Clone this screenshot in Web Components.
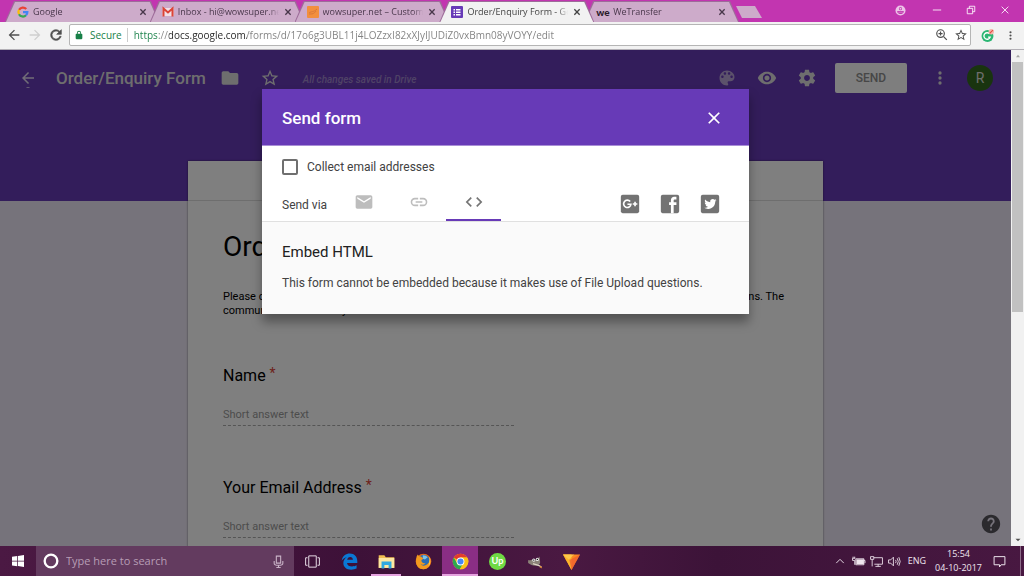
<!DOCTYPE html>
<html lang="en">
<head>
<meta charset="utf-8">
<title>Order/Enquiry Form - Google Forms</title>
<style>
  html, body { margin: 0; height: 100%; }
  body { font-family: Roboto, "Liberation Sans", sans-serif; overflow: hidden; }
</style>
</head>
<body>
<desk-top></desk-top>

<script>
const ICONS = {
  back: '<path d="M20 11H7.83l5.59-5.59L12 4l-8 8 8 8 1.41-1.41L7.83 13H20v-2z"/>',
  backhint: '<path d="M20 11H7.83l5.59-5.59L12 4l-8 8 8 8 1.41-1.41L7.83 13H20v-2z"/><path d="M10 24h4v1h-4z"/>',
  forward: '<path d="M4 11h12.17l-5.59-5.59L12 4l8 8-8 8-1.41-1.41L16.17 13H4v-2z"/>',
  reload: '<path d="M17.65 6.35A7.96 7.96 0 0 0 12 4a8 8 0 1 0 7.73 10h-2.08A6 6 0 1 1 12 6c1.66 0 3.14.69 4.22 1.78L13 11h7V4l-2.35 2.35z" stroke="currentColor" stroke-width="1"/>',
  lock: '<path d="M18 9h-1V7A5 5 0 0 0 7 7v2H6a2 2 0 0 0-2 2v9c0 1.100.9 2 2 2h12a2 2 0 0 0 2-2v-9a2 2 0 0 0-2-2zM9 7a3 3 0 0 1 6 0v2H9z"/>',
  zoom: '<circle cx="9.500" cy="9.500" r="6.500" fill="none" stroke="currentColor" stroke-width="2"/><path d="M14 15.500l1.500-1.500 5.500 5.500-1.500 1.500z"/><path d="M13 10.500h-2.500V13h-2v-2.500H6v-2h2.500V6h2v2.500H13z"/>',
  folder: '<path d="M10 4H4c-1.100 0-1.990.9-1.990 2L2 18c0 1.100.9 2 2 2h16c1.100 0 2-.9 2-2V8c0-1.100-.9-2-2-2h-8l-2-2z"/>',
  star: '<path d="M22 9.240l-7.190-.62L12 2 9.190 8.630 2 9.240l5.460 4.730L5.820 21 12 17.270 18.180 21l-1.630-7.030L22 9.240zM12 15.400l-3.760 2.270 1-4.280-3.320-2.880 4.380-.38L12 6.100l1.710 4.040 4.380.38-3.320 2.880 1 4.280L12 15.400z"/>',
  palette: '<path d="M12 3c-4.970 0-9 4.030-9 9s4.030 9 9 9c.83 0 1.500-.67 1.500-1.500 0-.39-.15-.74-.39-1.010-.23-.26-.38-.61-.38-.99 0-.83.67-1.500 1.500-1.500H16c2.760 0 5-2.240 5-5 0-4.420-4.030-8-9-8zm-5.500 9c-.83 0-1.500-.67-1.500-1.500S5.670 9 6.500 9 8 9.670 8 10.500 7.330 12 6.500 12zm3-4C8.670 8 8 7.330 8 6.500S8.670 5 9.500 5s1.500.67 1.500 1.500S10.330 8 9.500 8zm5 0c-.83 0-1.500-.67-1.500-1.500S13.670 5 14.500 5s1.500.67 1.500 1.500S15.330 8 14.500 8zm3 4c-.83 0-1.500-.67-1.500-1.500S16.670 9 17.500 9s1.500.67 1.500 1.500-.67 1.500-1.500 1.500z"/>',
  eye: '<path d="M12 4.500C7 4.500 2.730 7.610 1 12c1.730 4.390 6 7.500 11 7.500s9.270-3.110 11-7.500c-1.730-4.390-6-7.500-11-7.500zM12 17c-2.760 0-5-2.240-5-5s2.240-5 5-5 5 2.240 5 5-2.240 5-5 5zm0-8c-1.660 0-3 1.340-3 3s1.340 3 3 3 3-1.340 3-3-1.340-3-3-3z"/>',
  gear: '<path d="M19.430 12.980c.04-.32.07-.64.07-.98s-.03-.66-.07-.98l2.110-1.650c.19-.15.24-.42.12-.64l-2-3.460c-.12-.22-.39-.3-.61-.22l-2.490 1c-.52-.4-1.080-.73-1.690-.98l-.38-2.650C14.460 2.180 14.250 2 14 2h-4c-.25 0-.46.18-.49.42l-.38 2.650c-.61.25-1.170.59-1.690.98l-2.490-1c-.23-.09-.49 0-.61.22l-2 3.460c-.13.22-.07.49.12.64l2.110 1.650c-.04.32-.07.65-.07.98s.03.66.07.98l-2.110 1.650c-.19.15-.24.42-.12.64l2 3.460c.12.22.39.3.61.22l2.490-1c.52.4 1.080.73 1.690.98l.38 2.650c.03.24.24.42.49.42h4c.25 0 .46-.18.49-.42l.38-2.650c.61-.25 1.170-.59 1.690-.98l2.490 1c.23.09.49 0 .61-.22l2-3.460c.12-.22.07-.49-.12-.64l-2.110-1.650zM12 15.500c-1.930 0-3.500-1.570-3.500-3.500s1.570-3.500 3.500-3.500 3.500 1.570 3.500 3.500-1.570 3.500-3.500 3.500z"/>',
  more: '<path d="M12 8a2 2 0 1 0 0-4 2 2 0 0 0 0 4zm0 2a2 2 0 1 0 0 4 2 2 0 0 0 0-4zm0 6a2 2 0 1 0 0 4 2 2 0 0 0 0-4z"/>',
  close: '<path d="M19 6.410L17.590 5 12 10.590 6.410 5 5 6.410 10.590 12 5 17.590 6.410 19 12 13.410 17.590 19 19 17.590 13.410 12z"/>',
  thinclose: '<path d="M4 4l16 16M20 4L4 20" stroke="currentColor" stroke-width="2" fill="none"/>',
  tabclose: '<path d="M4 4l16 16M20 4L4 20" stroke="currentColor" stroke-width="4" fill="none"/>',
  mail: '<path d="M20 4H4c-1.100 0-1.990.9-1.990 2L2 18c0 1.100.9 2 2 2h16c1.100 0 2-.9 2-2V6c0-1.100-.9-2-2-2zm0 4l-8 5-8-5V6l8 5 8-5v2z"/>',
  link: '<path d="M3.900 12c0-1.710 1.390-3.100 3.100-3.100h4V7H7a5 5 0 0 0 0 10h4v-1.900H7A3.100 3.100 0 0 1 3.900 12zM8 13h8v-2H8v2zm9-6h-4v1.900h4a3.100 3.100 0 0 1 0 6.200h-4V17h4a5 5 0 0 0 0-10z"/>',
  code: '<path d="M9.400 16.600L4.800 12l4.600-4.600L8 6l-6 6 6 6 1.400-1.400zm5.200 0l4.600-4.600-4.600-4.600L16 6l6 6-6 6-1.400-1.400z"/>',
  help: '<path d="M12 2C6.480 2 2 6.480 2 12s4.480 10 10 10 10-4.480 10-10S17.520 2 12 2zm1 17h-2v-2h2v2zm2.070-7.750l-.9.92C13.450 12.900 13 13.500 13 15h-2v-.5c0-1.100.45-2.100 1.170-2.830l1.240-1.260c.37-.36.59-.86.59-1.410 0-1.100-.9-2-2-2s-2 .9-2 2H8c0-2.210 1.790-4 4-4s4 1.790 4 4c0 .88-.36 1.680-.93 2.250z"/>',
  account: '<circle cx="12" cy="12" r="11"/><g fill="#c235b0"><circle cx="12" cy="8" r="3.400"/><path d="M5 13h14v2c-1 3-4 4.500-7 4.500S6 18 5 15z"/></g><circle cx="12" cy="8" r="2"/><path d="M7 15h10v1H7z"/>',
  minimize: '<path d="M2 11h20v2H2z"/>',
  restore: '<path d="M3 8h13v13H3zM8 8V3h13v13h-5" fill="none" stroke="currentColor" stroke-width="2"/>',
  gplus: '<path d="M4 2h16a2 2 0 0 1 2 2v16a2 2 0 0 1-2 2H4a2 2 0 0 1-2-2V4a2 2 0 0 1 2-2z"/><path d="M12.200 9.400A4 4 0 1 0 13 12.300H9.200M17.500 9.500v5M15 12h5" fill="none" stroke="#fff" stroke-width="1.800"/>',
  facebook: '<path d="M20 2H4a2 2 0 0 0-2 2v16c0 1.100.9 2 2 2h16a2 2 0 0 0 2-2V4a2 2 0 0 0-2-2z"/><path fill="#fff" d="M19 4v3h-2c-.6 0-1 .4-1 1v2h3v3h-3v9h-3v-9h-2v-3h2V7.500C13 5.600 14.600 4 16.500 4z"/>',
  twitter: '<path d="M20 2H4a2 2 0 0 0-2 2v16c0 1.100.9 2 2 2h16a2 2 0 0 0 2-2V4a2 2 0 0 0-2-2z"/><path fill="#fff" d="M17.710 9.330c-.05 4.670-3.050 7.870-7.530 8.070-1.850.08-3.190-.52-4.350-1.260 1.360.22 3.050-.32 3.950-1.090-1.340-.13-2.130-.81-2.500-1.910.39.07.79.05 1.160-.02-1.210-.4-2.070-1.150-2.110-2.700.34.15.69.3 1.160.33-.89-.52-1.560-2.370-.8-3.610 1.340 1.460 2.930 2.660 5.580 2.820-.67-2.840 3.110-4.410 4.680-2.490.68-.13 1.220-.38 1.750-.67-.22.67-.63 1.120-1.150 1.500.57-.08 1.080-.22 1.500-.43-.27.56-.86 1.060-1.340 1.460z"/>',
  up: '<path d="M4 17l8-10 8 10z"/>', down: '<path d="M2 7l10 10L22 7z"/>',
  google: '<g fill="none" stroke-width="4.500"><path stroke="#ea4335" d="M18.500 6A9 9 0 0 0 4 7.800"/><path stroke="#fbbc05" d="M4 7.800a9 9 0 0 0 0 8.600"/><path stroke="#34a853" d="M4 16.400A9 9 0 0 0 18 18.600"/><path stroke="#4285f4" d="M18 18.600A9 9 0 0 0 20.700 12H12"/></g>',
  gmail: '<path fill="#f1dfe6" d="M1 4h22v16H1z"/><path fill="none" stroke="#db4437" stroke-width="4" d="M3 21V5l9 8 9-8v16"/>',
  feather: '<rect width="24" height="24" rx="2" fill="#f28f3d"/><path d="M4 14c5-4 9-1 16-8M4 16c6 0 10 0 14-6" fill="none" stroke="#d9783a" stroke-width="2"/>',
  forms: '<rect width="24" height="24" rx="2" fill="#673ab7"/><path fill="#fff" d="M5 6h3v3H5zm5 0h9v3h-9zm-5 5h3v3H5zm5 0h9v3h-9zm-5 5h3v3H5zm5 0h9v3h-9z"/>',
  grammarly: '<circle cx="12" cy="13" r="11" fill="#2bb673"/><path d="M16 9a6 6 0 1 0 1 6h-4" fill="none" stroke="#fff" stroke-width="2.500"/><circle cx="19" cy="5" r="5" fill="#f5b5ae"/><path d="M16 8l6-6" stroke="#e5483d" stroke-width="2"/>',
  windows: '<path fill="#fff" d="M0 3.500l10.500-1.500v9.500H0zM12 1.800L24 0v11.500H12zM0 13h10.500v9.500L0 21zM12 13h12v11l-12-1.800z"/>',
  cortana: '<circle cx="12" cy="12" r="9.500" fill="none" stroke="#fff" stroke-width="3.500"/>',
  mic: '<path d="M8 2h8v13H8zM4 11v4c0 3 3 4 8 4s8-1 8-4v-4M12 19v4M8 23h8" fill="none" stroke="currentColor" stroke-width="2"/>',
  taskview: '<path d="M6 3h12v18H6zM4 6H1v12h3M20 6h3v12h-3" fill="none" stroke="currentColor" stroke-width="1.500"/>',
  edge: '<path fill="#0a78d4" d="M1 11C2 4 7 .8 12.500.8 19 .8 23 5.500 23 11.500V14H8.500c.2 3.500 3.500 5 7 5 2.500 0 4.500-.6 6.500-1.700V22c-2 1-4.500 1.500-7.500 1.500C7.500 23.500 3.300 19.500 3.300 14c0-3.400 1.900-6.300 4.800-8C5 6.700 2.700 8.500 1 11zm7.700-1.300h8.100c0-2.900-1.500-4.200-3.800-4.200-2.400 0-3.900 1.800-4.300 4.200z"/>',
  explorer: '<path fill="#f0bd50" d="M1 3h8l2 3h12v15H1z"/><path fill="#fde7a2" d="M1 7h22v14H1z"/><path fill="#2fa8e0" d="M5 12h14v10h-4v-5H9v5H5z"/>',
  firefox: '<circle cx="12" cy="12" r="11" fill="#e66a17"/><circle cx="12.500" cy="10.500" r="8" fill="#2a6db5"/><path fill="#7cc3e8" d="M11 3c4 0 5 1 7 3l-4 3-3-1z"/><path fill="#f39a1f" d="M2 7c0-2 1-4 2-5 1 2 2 3 4 3 2 .5 2 2 4 3l-3 2c0 4 3 5 6 4-2 3-5 3-7 2 3 4 11 2 13-6 2 7-3 13-9 13C4 23 0 16 2 7z"/><path fill="#fbd04e" d="M20 5c3 5 2 11-1 14 1-4 2-8 1-14z"/>',
  chrome: '<circle cx="12" cy="12" r="11" fill="#fbc116"/><path fill="#e33b2e" d="M12 12L2.500 6.500A11 11 0 0 1 21.500 6.500H12z"/><path fill="#2da94f" d="M2.500 6.500A11 11 0 0 0 11 23l5.500-9L12 12l-4.500 3z"/><path fill="#fbc116" d="M12 6.500h9.500A11 11 0 0 1 11 23l6-10z"/><circle cx="12" cy="12" r="5.500" fill="#fff"/><circle cx="12" cy="12" r="4.300" fill="#4688f4"/>',
  upwork: '<circle cx="12" cy="12" r="12" fill="#6fda44"/><text x="12" y="16" text-anchor="middle" font-family="Lato, sans-serif" font-weight="700" font-size="13" fill="#fff">Up</text>',
  gimp: '<path fill="#8b8378" d="M3 10c3 1 5-1 7-1l5 1 4-5 1 8c0 3-3 5-6 5-5 0-8-2-11-4z"/><circle cx="11" cy="10" r="2.200" fill="#eee"/><circle cx="16" cy="9" r="2.200" fill="#eee"/><circle cx="11" cy="10" r="1" fill="#111"/><circle cx="16" cy="9" r="1" fill="#111"/><path d="M10 15c4 2 7 1 12 5" fill="none" stroke="#ded5c4" stroke-width="1.600"/><path d="M21 18l2 4-4-2z" fill="#e88b2c"/>',
  triangle: '<path fill="#f98b22" d="M0 2h24L12 24z"/><path fill="#fbb52c" d="M0 2h12v22z"/><path fill="#ef5b31" d="M24 2L12 24 9 10z" opacity=".7"/><path fill="#fcd05a" d="M0 2h16L8 9z" opacity=".7"/>',
  chevron: '<path d="M3 17l9-9 9 9" fill="none" stroke="currentColor" stroke-width="2.200"/>',
  battery: '<path d="M8 8h14v9H8z" fill="currentColor"/><path d="M7 7h15v11H7zM22 10h2v5M1 6h5M2 3v3M5 3v3M1 6v4h4v8" fill="none" stroke="currentColor" stroke-width="1.600"/>',
  network: '<path d="M7 5h16v12H8M15 17v4M10 21h10M1 3h6v5H1zM4 8v13" fill="none" stroke="currentColor" stroke-width="1.600"/>',
  sound: '<path d="M1 9h4l5-5v16l-5-5H1zM14 9q2 3 0 6M17 6q4 6 0 12M20 4q5 8 0 16" fill="none" stroke="currentColor" stroke-width="1.600"/>',
  notify: '<path d="M2 3h20v15h-7l-3 4v-4H2z" fill="none" stroke="currentColor" stroke-width="1.800"/>'
};

/* Registers an element whose shadow root is cloned from a template. */
function component(name, css, html, setup) {
  const template = document.createElement('template');
  template.innerHTML = `<style>*{box-sizing:border-box}button{font:inherit;color:inherit;background:none;border:0;padding:0;margin:0;display:flex;align-items:center;justify-content:center}${css}</style>${html}`;
  customElements.define(name, class extends HTMLElement {
    connectedCallback() {
      if (this.shadowRoot) return;
      this.attachShadow({ mode: 'open' }).append(template.content.cloneNode(true));
      if (setup) setup(this, this.shadowRoot);
    }
  });
}

component('ui-icon', `
  :host { display: inline-flex; flex: none; width: var(--size, 20px); height: var(--size, 20px); }
  svg { width: 100%; height: 100%; fill: currentColor; overflow: visible; }`,
  '<svg viewBox="0 0 24 24" aria-hidden="true"></svg>',
  (el, root) => { root.querySelector('svg').innerHTML = ICONS[el.getAttribute('name')] || ''; });

component('browser-tab', `
  :host { display: block; flex: 1; min-width: 0; margin-right: -10px; height: 22px; padding-top: 1px; position: relative; }
  :host([active]) { z-index: 1; }
  .edge { height: 21px; background: #9d6c99; clip-path: polygon(9px 0, calc(100% - 9px) 0, 100% 100%, 0 100%); padding: 1px 0 0; }
  .face { display: flex; align-items: center; gap: 4px; height: 20px; padding: 0 12px; background: #cdabca; color: #49374b;
    clip-path: polygon(10px 0, calc(100% - 10px) 0, calc(100% - 1px) 100%, 1px 100%); }
  :host([active]) .face { background: #f2f2f2; color: #444; }
  .label { flex: 1; min-width: 0; overflow: hidden; white-space: nowrap; font-size: 9px; line-height: 14px;
    -webkit-mask-image: linear-gradient(to right, #000 calc(100% - 10px), transparent); mask-image: linear-gradient(to right, #000 calc(100% - 10px), transparent); }
  .close { --size: 8px; width: 10px; height: 14px; }
  ::slotted([slot=icon]) { --size: 12px; }`,
  '<div class="edge"><div class="face"><slot name="icon"></slot><span class="label"><slot></slot></span><button class="close" aria-label="Close tab"><ui-icon name="tabclose"></ui-icon></button></div></div>');

component('tab-strip', `
  :host { display: flex; height: 22px; background: #c235b0; font-family: "Open Sans", "Noto Sans", sans-serif; }
  .tabs { display: flex; flex: 0 1 729px; min-width: 0; padding-left: 5px; }
  .new { width: 26px; height: 12px; margin: 6px 0 0 7px; background: #cdabca; clip-path: polygon(0 0, 19px 0, 100% 100%, 6px 100%); }
  .window { display: flex; align-items: center; margin-left: auto; height: 20px; padding-right: 2px; color: #fff; --size: 10px; }
  .window button { width: 34px; height: 20px; }
  .window .who { width: 40px; --size: 11px; color: #ecc3e7; }
  .we { font-family: Lato, sans-serif; font-weight: 900; font-size: 10px; line-height: 12px; width: 13px; color: #2c1b2c; }`,
  `<nav class="tabs" aria-label="Tabs">
    <browser-tab><ui-icon slot="icon" name="google"></ui-icon>Google</browser-tab>
    <browser-tab><ui-icon slot="icon" name="gmail"></ui-icon>Inbox - hi@wowsuper.net</browser-tab>
    <browser-tab><ui-icon slot="icon" name="feather"></ui-icon>wowsuper.net – Custom A</browser-tab>
    <browser-tab active><ui-icon slot="icon" name="forms"></ui-icon>Order/Enquiry Form - Goo</browser-tab>
    <browser-tab><span slot="icon" class="we">we</span>WeTransfer</browser-tab>
  </nav>
  <button class="new" aria-label="New tab"></button>
  <div class="window">
    <button class="who" aria-label="Profile"><ui-icon name="account"></ui-icon></button>
    <button aria-label="Minimize"><ui-icon name="minimize"></ui-icon></button>
    <button aria-label="Restore"><ui-icon name="restore"></ui-icon></button>
    <button aria-label="Close"><ui-icon name="thinclose"></ui-icon></button>
  </div>`);

component('address-bar', `
  :host { display: flex; align-items: center; height: 28px; padding: 0 2px 1px 3px; background: #f2f2f2; border-bottom: 1px solid #b3b0b6; color: #505050; font-family: "Open Sans", "Noto Sans", sans-serif; }
  .nav { width: 21px; height: 22px; --size: 16px; }
  .off { color: #cfcfcf; }
  .box { flex: 1; min-width: 0; display: flex; align-items: center; height: 22px; margin: 0 5px 0 3px; padding: 0 0 0 4px; background: #fff; border: 1px solid #b5b5b5; border-radius: 2px; font-size: 10px; line-height: 16px; }
  .secure { display: flex; align-items: center; gap: 6px; height: 14px; padding-right: 5px; border-right: 1px solid #ccc; color: #188048; --size: 10px; }
  input { flex: 1; min-width: 0; height: 18px; border: 0; padding: 0; margin-left: 6px; font: inherit; color: transparent; outline: 0;
    background: linear-gradient(to right, #188048 25px, #888 25px 35px, #222 35px 113px, #808080 113px); -webkit-background-clip: text; background-clip: text; }
  .in { width: 19px; height: 18px; --size: 14px; }
  .ext { width: 23px; height: 22px; --size: 13px; }`,
  `<button class="nav" aria-label="Back"><ui-icon name="back"></ui-icon></button>
  <button class="nav off" aria-label="Forward"><ui-icon name="forward"></ui-icon></button>
  <button class="nav" aria-label="Reload"><ui-icon name="reload"></ui-icon></button>
  <div class="box">
    <span class="secure"><ui-icon name="lock"></ui-icon>Secure</span>
    <input type="text" aria-label="Address" value="https://docs.google.com/forms/d/17o6g3UBL11j4LOZzxI82xXJyIJUDiZ0vxBmn08yVOYY/edit">
    <button class="in" aria-label="Zoom"><ui-icon name="zoom"></ui-icon></button>
    <button class="in" aria-label="Bookmark"><ui-icon name="star"></ui-icon></button>
  </div>
  <button class="ext" aria-label="Grammarly"><ui-icon name="grammarly"></ui-icon></button>
  <button class="ext" aria-label="Menu"><ui-icon name="more"></ui-icon></button>`);

component('form-header', `
  :host { display: flex; align-items: center; height: 56px; padding: 0 18px; color: #fff; }
  .back { width: 20px; --size: 18px; color: #e3dcef; }
  h1 { margin: 0 14px 0 18px; font-size: 17px; line-height: 24px; font-weight: 500; color: #ddd; white-space: nowrap; }
  .left, .right { display: flex; align-items: center; }
  .left { gap: 20px; color: #ddd; }
  .saved { margin: 3px 0 0 3px; font-size: 10px; line-height: 16px; font-style: italic; font-weight: 500; color: #9f86cc; white-space: nowrap; }
  .right { margin-left: auto; gap: 20px; }
  .right button { color: #ddd; }
  .right .theme { color: #b8a5d6; }
  .right .send { width: 72px; height: 30px; margin-left: -2px; border-radius: 2px; background: #fcfcfc; color: #8e8e8e; font-size: 12px; font-weight: 500; }
  .right .more { width: 26px; --size: 20px; }
  .right .avatar { width: 26px; height: 26px; margin-left: -6px; border-radius: 50%; background: #33691e; color: #ddd; font-size: 14px; }`,
  `<button class="back" aria-label="Forms home"><ui-icon name="backhint"></ui-icon></button>
  <h1>Order/Enquiry Form</h1>
  <div class="left">
    <button aria-label="Move to folder"><ui-icon name="folder"></ui-icon></button>
    <button aria-label="Star"><ui-icon name="star"></ui-icon></button>
    <span class="saved">All changes saved in Drive</span>
  </div>
  <div class="right">
    <button class="theme" aria-label="Color palette"><ui-icon name="palette"></ui-icon></button>
    <button aria-label="Preview"><ui-icon name="eye"></ui-icon></button>
    <button aria-label="Settings"><ui-icon name="gear"></ui-icon></button>
    <button class="send">SEND</button>
    <button class="more" aria-label="More"><ui-icon name="more"></ui-icon></button>
    <button class="avatar" aria-label="Account">R</button>
  </div>`);

component('form-question', `
  :host { display: block; }
  label { display: block; font-size: 16px; line-height: 20px; color: #000; }
  sup { color: #db4437; font-size: 14px; line-height: 10px; vertical-align: 3px; }
  input { display: block; width: 291px; max-width: 100%; height: 20px; margin-top: 20px; padding: 0 0 3px; border: 0; border-bottom: 1px dashed #aaa; border-radius: 0; background: none; font: 11px/16px Roboto, sans-serif; }
  input::placeholder { color: #999; opacity: 1; }`,
  '<label for="answer"><slot></slot> <sup>*</sup></label><input id="answer" type="text" placeholder="Short answer text" readonly>');

component('form-sheet', `
  :host { display: block; width: 100%; max-width: 635px; min-height: 600px; margin: 55px auto 0; background: #fff; box-shadow: 0 0 2px rgba(0,0,0,.5); color: #000; }
  .top { height: 40px; border-bottom: 1px solid #ddd; }
  .content { padding: 28px 39px 0 35px; }
  h2 { margin: 0 0 25px; font-size: 28px; line-height: 36px; font-weight: 400; }
  p { margin: 0 0 48px; font-size: 11px; line-height: 14px; text-align: justify; }
  .questions { display: grid; gap: 52px; }`,
  `<div class="top"></div>
  <div class="content">
    <h2>Order/Enquiry Form</h2>
    <p>Please complete the form below to place an order or a new enquiry, and we will reply to each of your questions. The communication will be by email.</p>
    <div class="questions"><form-question>Name</form-question><form-question>Your Email Address</form-question></div>
  </div>`);

component('send-dialog', `
  :host { display: block; width: 487px; max-width: 100%; background: #fff; color: #424242; box-shadow: 0 8px 10px rgba(0,0,0,.35); font-size: 12px; line-height: 16px; }
  header { display: flex; align-items: center; justify-content: space-between; height: 57px; padding: 2px 25px 0 20px; background: #673ab7; border-bottom: 1px solid #a98fd6; color: #fff; }
  h2 { margin: 0; font-size: 17px; line-height: 24px; font-weight: 500; }
  header button { --size: 20px; }
  .options { padding: 13px 20px 0; border-bottom: 1px solid #e0e0e0; }
  .collect { display: flex; align-items: center; gap: 9px; }
  .collect input { appearance: none; width: 16px; height: 16px; margin: 0; border: 2px solid #6f6f6f; border-radius: 2px; background: #fff; }
  .via { display: flex; align-items: center; margin-top: 10px; height: 36px; }
  .via > span { width: 54px; padding-top: 3px; white-space: nowrap; }
  .tab { width: 55px; height: 36px; border-bottom: 2px solid transparent; color: #bdbdbd; --size: 20px; }
  .tab[aria-selected=true] { border-color: #673ab7; color: #757575; }
  .tabs { display: flex; }
  .share { display: flex; gap: 18px; margin-left: auto; padding: 2px 8px 0 0; --size: 22px; color: #737373; }
  .panel { padding: 20px 20px 23px; background: #fafafa; }
  h3 { margin: 0 0 13px; font-size: 15px; line-height: 20px; font-weight: 400; color: #212121; }
  p { margin: 0; }`,
  `<header><h2>Send form</h2><button aria-label="Close"><ui-icon name="close"></ui-icon></button></header>
  <div class="options">
    <label class="collect"><input type="checkbox">Collect email addresses</label>
    <div class="via"><span>Send via</span>
      <div class="tabs" role="tablist">
        <button class="tab" role="tab" aria-label="Email"><ui-icon name="mail"></ui-icon></button>
        <button class="tab" role="tab" aria-label="Link"><ui-icon name="link"></ui-icon></button>
        <button class="tab" role="tab" aria-selected="true" aria-label="Embed HTML"><ui-icon name="code"></ui-icon></button>
      </div>
      <div class="share">
        <button aria-label="Google+"><ui-icon name="gplus"></ui-icon></button>
        <button aria-label="Facebook"><ui-icon name="facebook"></ui-icon></button>
        <button aria-label="Twitter"><ui-icon name="twitter"></ui-icon></button>
      </div>
    </div>
  </div>
  <div class="panel"><h3>Embed HTML</h3><p>This form cannot be embedded because it makes use of File Upload questions.</p></div>`,
  el => { el.setAttribute('role', 'dialog'); el.setAttribute('aria-modal', 'true'); el.setAttribute('aria-label', 'Send form'); });

component('scroll-rail', `
  :host { display: flex; flex-direction: column; align-items: center; width: 13px; background: #f1f1f1; --size: 6px; color: #505050; }
  .arrow { width: 13px; height: 12px; }
  .arrow.top { color: #a3a3a3; }
  .track { flex: 1; width: 11px; }
  .thumb { height: 53%; background: #c1c1c1; }`,
  `<button class="arrow top" aria-label="Scroll up"><ui-icon name="up"></ui-icon></button>
  <div class="track"><div class="thumb"></div></div>
  <button class="arrow" aria-label="Scroll down"><ui-icon name="down"></ui-icon></button>`);

component('form-page', `
  :host { display: flex; flex: 1; min-height: 0; }
  main { position: relative; flex: 1; min-width: 0; overflow: hidden; background: linear-gradient(#673ab7 151px, #ede7f6 151px); }
  .scrim { position: absolute; inset: 0; display: flex; align-items: flex-start; justify-content: center; padding-top: 39px; background: rgba(0,0,0,.5); }
  .help { position: absolute; right: 9px; bottom: 11px; --size: 22px; color: #2b2a2e; }`,
  `<main><form-header></form-header><form-sheet></form-sheet>
    <div class="scrim"><send-dialog></send-dialog></div>
    <button class="help" aria-label="Help"><ui-icon name="help"></ui-icon></button>
  </main><scroll-rail></scroll-rail>`);

component('task-bar', `
  :host { display: flex; align-items: center; height: 30px; background: linear-gradient(to right, #4b1943, #3d1138 35%, #4a1942 55%, #3c1338 70%, #481841); color: #f0e6ef; font-family: "Open Sans", "Noto Sans", sans-serif; }
  .start { width: 36px; height: 30px; --size: 12px; }
  .search { display: flex; align-items: center; gap: 7px; width: 258px; height: 30px; padding: 0 9px 0 7px; background: #633b5f; color: #c9b3c7; --size: 16px; }
  .search input { flex: 1; min-width: 0; border: 0; padding: 0; background: none; font: 11px/16px "Open Sans", sans-serif; outline: 0; }
  .search input::placeholder { color: #b79db5; opacity: 1; }
  .search button { --size: 13px; }
  .apps { display: flex; gap: 1px; --size: 17px; }
  .apps button { width: 36px; height: 30px; border-bottom: 2px solid transparent; padding-top: 2px; }
  .apps .view { --size: 15px; }
  .apps .open { background: linear-gradient(#e5a3df, #e5a3df) center bottom / 30px 2px no-repeat; border: 0; padding: 0; }
  .apps .active { background: #8a2e84; border-color: #e5a3df; }
  .tray { display: flex; align-items: center; margin-left: auto; font-size: 9px; line-height: 14px; --size: 13px; }
  .tray button { width: 18px; height: 30px; }
  .tray .up { --size: 10px; width: 20px; }
  .lang { margin-left: 4px; }
  .clock { margin: 0 8px 0 9px; text-align: center; white-space: nowrap; }
  .peek { width: 4px; height: 30px; margin-left: 12px; border-left: 1px solid #8d6c89; }`,
  `<button class="start" aria-label="Start"><ui-icon name="windows"></ui-icon></button>
  <div class="search"><ui-icon name="cortana"></ui-icon><input type="text" aria-label="Search" placeholder="Type here to search"><button aria-label="Voice"><ui-icon name="mic"></ui-icon></button></div>
  <div class="apps">
    <button class="view" aria-label="Task view"><ui-icon name="taskview"></ui-icon></button>
    <button aria-label="Edge"><ui-icon name="edge"></ui-icon></button>
    <button class="open" aria-label="File Explorer"><ui-icon name="explorer"></ui-icon></button>
    <button aria-label="Firefox"><ui-icon name="firefox"></ui-icon></button>
    <button class="active" aria-label="Chrome"><ui-icon name="chrome"></ui-icon></button>
    <button aria-label="Upwork"><ui-icon name="upwork"></ui-icon></button>
    <button aria-label="GIMP"><ui-icon name="gimp"></ui-icon></button>
    <button aria-label="Player"><ui-icon name="triangle"></ui-icon></button>
  </div>
  <div class="tray">
    <button class="up" aria-label="Hidden icons"><ui-icon name="chevron"></ui-icon></button>
    <button aria-label="Battery"><ui-icon name="battery"></ui-icon></button>
    <button aria-label="Network"><ui-icon name="network"></ui-icon></button>
    <button aria-label="Volume"><ui-icon name="sound"></ui-icon></button>
    <span class="lang">ENG</span>
    <div class="clock">15:54<br>04-10-2017</div>
    <button aria-label="Notifications"><ui-icon name="notify"></ui-icon></button>
    <span class="peek"></span>
  </div>`);

component('desk-top', `
  :host { display: flex; flex-direction: column; height: 100vh; }`,
  '<tab-strip></tab-strip><address-bar></address-bar><form-page></form-page><task-bar></task-bar>');
</script>
</body>
</html>
